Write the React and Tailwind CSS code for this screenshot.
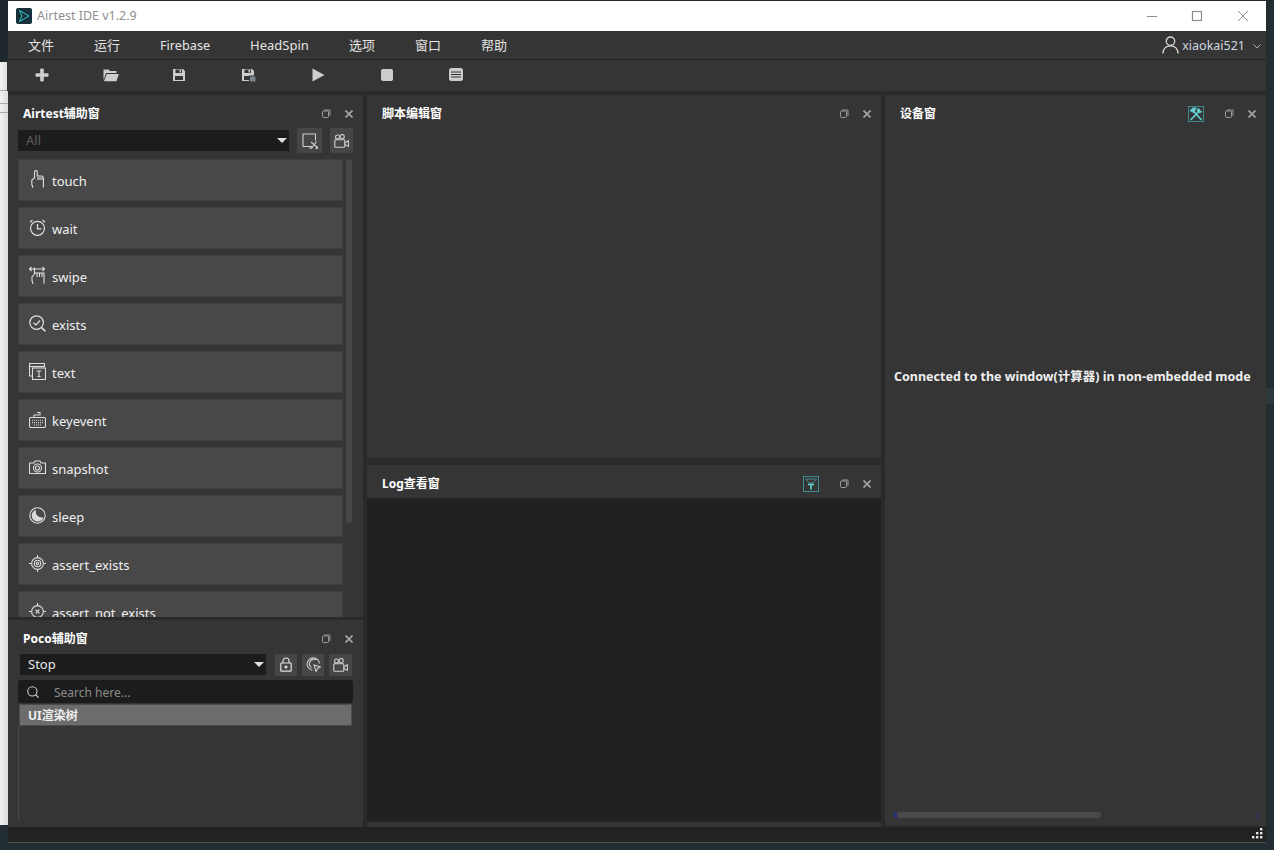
import React from "react";

const font = "font-['Noto_Sans','Noto_Sans_CJK_SC',sans-serif]";

function Logo() {
  return (
    <svg width="16" height="16" viewBox="0 0 16 16">
      <rect width="16" height="16" rx="2" fill="#16313a" />
      <path d="M3.5 2.5 L13 8 L3.5 13.5 L6 8 Z" fill="none" stroke="#35c4c9" strokeWidth="1" />
    </svg>
  );
}

function WindowControls() {
  return (
    <svg width="101" height="12" viewBox="0 0 101 12" fill="none" stroke="#8c8c8c" className="mr-[18px]">
      <path d="M0 6.5 H10" />
      <rect x="45.5" y="1.5" width="9" height="9" strokeWidth="1.2" />
      <path d="M91 1 L101 11 M101 1 L91 11" />
    </svg>
  );
}

function FloatIcon() {
  return (
    <svg width="9" height="9" viewBox="0 0 9 9" fill="none" stroke="#9a9a9a" strokeWidth="1">
      <rect x="0.5" y="2" width="6" height="6.5" rx="1" />
      <path d="M2 1 H8 V7" />
    </svg>
  );
}

function CloseIcon() {
  return (
    <svg width="8" height="8" viewBox="0 0 8 8" fill="none" stroke="#a4a4a4" strokeWidth="1.7">
      <path d="M0.5 0.5 L7.5 7.5 M7.5 0.5 L0.5 7.5" />
    </svg>
  );
}

function DockTitle({ title, extra, className = "" }) {
  return (
    <div className={`flex items-center h-[33px] pt-[4px] shrink-0 pr-[10px] ${className}`}>
      <span className="font-bold text-[12px] text-white">{title}</span>
      <div className="ml-auto flex items-center">
        {extra}
        <div className="flex items-center gap-[14px]">
          <FloatIcon />
          <CloseIcon />
        </div>
      </div>
    </div>
  );
}

function ToolButton({ className = "w-[22px] h-[22px]", children }) {
  return (
    <div className={`${className} bg-[#464646] flex items-center justify-center shrink-0`}>
      {children}
    </div>
  );
}

function TealBox({ children }) {
  return (
    <div className="w-[16px] h-[16px] border border-[#3c8c90] flex items-center justify-center mr-[21px]">
      {children}
    </div>
  );
}

function CropIcon() {
  return (
    <svg width="16" height="16" viewBox="0 0 16 16" fill="none" stroke="#cfcfcf" strokeWidth="1.1">
      <path d="M8 13.5 H1 V1 H13.5 V7.5" />
      <path d="M9 9 L15 14 M14.5 8.5 L10 14.5" />
      <circle cx="9" cy="14.3" r="1.1" />
      <circle cx="15" cy="14.8" r="0.9" />
    </svg>
  );
}

function MovieIcon() {
  return (
    <svg width="15" height="14" viewBox="0 0 15 14" fill="none" stroke="#cfcfcf" strokeWidth="1.1">
      <circle cx="3.5" cy="3" r="2" />
      <circle cx="8.2" cy="2.6" r="2.1" />
      <rect x="0.8" y="5.8" width="10" height="7.4" rx="0.8" />
      <path d="M10.8 9 L14.4 6.8 V12.4 L10.8 10.4" />
    </svg>
  );
}

function LockIcon() {
  return (
    <svg width="12" height="15" viewBox="0 0 12 15" fill="none" stroke="#e0e0e0" strokeWidth="1.2">
      <path d="M3 6 V4 a3 3 0 0 1 6 0 V6" />
      <rect x="0.8" y="6" width="10.4" height="8.2" rx="0.8" />
      <circle cx="6" cy="10" r="1" fill="#e0e0e0" />
    </svg>
  );
}

function ReloadCursorIcon() {
  return (
    <svg width="15" height="15" viewBox="0 0 15 15" fill="none" stroke="#cfcfcf" strokeWidth="1.1">
      <path d="M13.5 6.5 A6.2 6.2 0 1 0 6.5 13.2" />
      <path d="M10.5 3 A4.2 4.2 0 1 0 5.5 10.8" />
      <path d="M8 8 L14.5 10 L11.5 11.5 L10 14.5 Z" />
    </svg>
  );
}

function TouchIcon() {
  return (
    <svg width="13" height="18" viewBox="0 0 13 18" fill="none" stroke="#e0e0e0" strokeWidth="1.1" className="ml-[2px]">
      <path d="M3.5 8 V2 a1.4 1.4 0 0 1 2.8 0 V6 H10 a2.3 2.3 0 0 1 2.4 2.4 V17.5" />
      <path d="M3.5 8 L0.8 10 V14.5 L2 17.8" />
      <path d="M7 7 V10 M9 7 V10 M11 7.5 V10" />
    </svg>
  );
}

function AlarmIcon() {
  return (
    <svg width="17" height="17" viewBox="0 0 17 17" fill="none" stroke="#e0e0e0" strokeWidth="1.2">
      <circle cx="8.5" cy="9.3" r="7" />
      <path d="M8.5 5 V9.8 H12.5" />
      <path d="M1 3.2 L3.5 1 M16 3.2 L13.5 1" />
    </svg>
  );
}

function SwipeIcon() {
  return (
    <svg width="16" height="18" viewBox="0 0 16 18" fill="none" stroke="#e0e0e0" strokeWidth="1.1">
      <path d="M0.5 3 H15.5 M2.5 1 L0.5 3 L2.5 5 M13.5 1 L15.5 3 L13.5 5" />
      <path d="M5.5 8 V1.5 M5.5 8 L3 11 V14.5 L4 17.8" />
      <path d="M5.5 7 H15 V17.8" />
      <path d="M8 7 V11 M10.5 7 V11 M13 7 V11" />
    </svg>
  );
}

function CheckSearchIcon() {
  return (
    <svg width="17" height="17" viewBox="0 0 17 17" fill="none" stroke="#e0e0e0" strokeWidth="1.2">
      <circle cx="7.6" cy="7.6" r="6.8" />
      <path d="M4.5 7.8 L7 10 L11 5.5" />
      <path d="M12.6 12.6 L16.4 16.4" strokeWidth="1.5" />
    </svg>
  );
}

function TextIcon() {
  return (
    <svg width="17" height="17" viewBox="0 0 17 17" fill="none" stroke="#dcdcdc" strokeWidth="1.1">
      <path d="M3 13 H0.5 V0.5 H15.5 V4" />
      <path d="M0.5 3.5 H15.5" />
      <rect x="3.5" y="5" width="13" height="11.5" />
      <path d="M7.5 8 H12.5 M10 8 V13.5 M8.5 13.5 H11.5" />
    </svg>
  );
}

function KeyboardIcon() {
  return (
    <svg width="17" height="17" viewBox="0 0 17 17" fill="none" stroke="#dcdcdc" strokeWidth="1.1">
      <path d="M5 6 V4 H11 V1.5 H8" />
      <rect x="0.5" y="6.5" width="16" height="10" rx="1.5" />
      <path d="M3 9.3 H14 M3 11.6 H14 M5 14 H12" strokeDasharray="1 1" />
    </svg>
  );
}

function SnapshotIcon() {
  return (
    <svg width="17" height="14" viewBox="0 0 17 14" fill="none" stroke="#dcdcdc" strokeWidth="1.1">
      <path d="M0.5 3 H5 L6 1 H11 L12 3 H16.5 V13.5 H0.5 Z" />
      <circle cx="8.5" cy="8" r="4" />
      <circle cx="8.5" cy="8" r="2" />
    </svg>
  );
}

function SleepIcon() {
  return (
    <svg width="17" height="17" viewBox="0 0 17 17" fill="none" stroke="#dcdcdc">
      <circle cx="8.5" cy="8.5" r="7.7" strokeWidth="1.1" />
      <path d="M7 2.8 a6 6 0 1 0 7.5 7.5 a6 6 0 0 1 -7.5 -7.5 Z" fill="#dcdcdc" stroke="none" />
    </svg>
  );
}

function TargetIcon({ cross }) {
  return (
    <svg width="17" height="17" viewBox="0 0 18 18" fill="none" stroke="#dcdcdc" strokeWidth="1.2">
      <circle cx="9" cy="9" r="6.2" />
      <path d="M9 0 V2.5 M9 15.5 V18 M0 9 H2.5 M15.5 9 H18" />
      {cross ? (
        <path d="M7 7 L11 11 M11 7 L7 11" strokeWidth="1.4" />
      ) : (
        <>
          <circle cx="9" cy="9" r="3.4" />
          <circle cx="9" cy="9" r="1.2" />
        </>
      )}
    </svg>
  );
}

const actions = [
  ["touch", <TouchIcon />],
  ["wait", <AlarmIcon />],
  ["swipe", <SwipeIcon />],
  ["exists", <CheckSearchIcon />],
  ["text", <TextIcon />],
  ["keyevent", <KeyboardIcon />],
  ["snapshot", <SnapshotIcon />],
  ["sleep", <SleepIcon />],
  ["assert_exists", <TargetIcon />],
  ["assert_not_exists", <TargetIcon cross />],
];

function ActionRow({ name, icon }) {
  return (
    <div className="h-[42px] shrink-0 bg-[#484848] border border-[#3e3e3e] flex items-center pl-[10px] text-[13px] text-[#f0f0f0]">
      <span className="w-[23px] flex -mt-[2px]">{icon}</span>
      <span className="pt-[4px]">{name}</span>
    </div>
  );
}

function Floppy({ badge }) {
  return (
    <svg width="15" height="14" viewBox="0 0 15 14">
      <path
        fillRule="evenodd"
        fill="#cdcdcd"
        d="M1 1 H11 L13 3 V13 H1 Z M3.5 1.5 V5 H10 V1.5 Z M7.5 2 H9 V4.5 H7.5 Z M3 8 V12 H11 V8 Z"
      />
      {badge && <rect x="8.5" y="8" width="6.5" height="6" fill="#7c878c" stroke="#353535" />}
    </svg>
  );
}

function ToolbarIcon({ children }) {
  return <div className="w-[69px] flex items-center justify-center">{children}</div>;
}

function Caret() {
  return <div className="ml-auto mr-[2px] border-x-[5px] border-x-transparent border-t-[5px] border-t-[#e0e0e0]" />;
}

export default function App() {
  return (
    <div className={`w-[1274px] h-[850px] overflow-hidden flex bg-[#222d31] ${font}`}>
      <div className="w-[8px] shrink-0 flex flex-col">
        <div className="h-[62px] bg-[#1e282c]" />
        <div className="h-[763px] bg-gradient-to-r from-[#f2f2f2] to-[#dcdcdc]">
          <div className="h-[28px]" />
          <div className="h-px bg-[#a8a8a8]" />
          <div className="h-[12px]" />
          <div className="h-px bg-[#a8a8a8]" />
          <div className="h-[8px]" />
          <div className="h-px bg-[#a8a8a8]" />
        </div>
      </div>
      <div className="w-[1258px] h-[842px] shrink-0 flex flex-col bg-[#2a2a2a] mt-[1px] border-b border-[#4a5052]">
        <div className="h-[30px] shrink-0 bg-white flex items-center pl-[8px]">
          <Logo />
          <span className="ml-[5px] text-[12.5px] text-[#8f8f8f]">Airtest IDE v1.2.9</span>
          <div className="ml-auto flex items-center">
            <WindowControls />
          </div>
        </div>
        <div className="h-[29px] pt-[2px] shrink-0 bg-[#353535] border-b border-[#232323] flex items-center pl-[20px] text-[13px] text-[#e4e4e4]">
          <span className="w-[66px]">文件</span>
          <span className="w-[66px]">运行</span>
          <span className="w-[90px] text-[12.7px]">Firebase</span>
          <span className="w-[99px]">HeadSpin</span>
          <span className="w-[66px]">选项</span>
          <span className="w-[66px]">窗口</span>
          <span>帮助</span>
          <div className="ml-auto flex items-center pr-[5px]">
            <svg width="17" height="18" viewBox="0 0 17 18" fill="none" stroke="#d8d8d8" strokeWidth="1.3" className="-mt-[2px]">
              <circle cx="8.5" cy="5.2" r="4.2" />
              <path d="M0.8 17.5 C1.2 12.5 4.5 9.8 8.5 9.8 C12.5 9.8 15.8 12.5 16.2 17.5" />
            </svg>
            <span className="ml-[3px] text-[12.5px] text-[#d0d8e0]">xiaokai521</span>
            <svg width="8" height="5" viewBox="0 0 8 5" fill="none" stroke="#b0b0b0" className="ml-[8px]">
              <path d="M0.5 0.5 L4 4 L7.5 0.5" />
            </svg>
          </div>
        </div>
        <div className="h-[31px] pb-[2px] shrink-0 bg-[#353535] flex items-center -ml-[1px]">
          <ToolbarIcon>
            <svg width="14" height="14" viewBox="0 0 14 14" fill="#cdcdcd">
              <rect x="5.2" y="0.5" width="3.6" height="13" rx="1" />
              <rect x="0.5" y="5.2" width="13" height="3.6" rx="1" />
            </svg>
          </ToolbarIcon>
          <ToolbarIcon>
            <svg width="16" height="14" viewBox="0 0 16 14" fill="#cdcdcd">
              <path d="M0.5 12 V1.5 H5.5 L7 3 H13.5 V5 H3 Z" />
              <path d="M3.7 6 H15.8 L13.5 13.2 H1 Z" />
            </svg>
          </ToolbarIcon>
          <ToolbarIcon><Floppy /></ToolbarIcon>
          <ToolbarIcon><Floppy badge /></ToolbarIcon>
          <ToolbarIcon>
            <svg width="13" height="14" viewBox="0 0 13 14" fill="#cdcdcd" className="ml-[1px]">
              <path d="M0.5 0.5 L12.5 7 L0.5 13.5 Z" />
            </svg>
          </ToolbarIcon>
          <ToolbarIcon>
            <svg width="12" height="12" viewBox="0 0 12 12" fill="#cdcdcd">
              <rect width="12" height="12" rx="2" />
            </svg>
          </ToolbarIcon>
          <ToolbarIcon>
            <svg width="14" height="13" viewBox="0 0 14 13">
              <rect width="14" height="13" rx="2.5" fill="#cdcdcd" />
              <path d="M2 4 H12 M2 6.5 H12 M2 9 H12" stroke="#353535" strokeWidth="1" />
            </svg>
          </ToolbarIcon>
        </div>
        <div className="flex-1 min-h-0 flex pt-[4px] gap-[4px]">
          <div className="w-[355px] shrink-0 flex flex-col">
            <div className="h-[522px] shrink-0 bg-[#353535] pl-[10px] flex flex-col overflow-hidden">
              <DockTitle title={<span className="pl-[5px]">Airtest辅助窗</span>} />
              <div className="flex items-center h-[25px] shrink-0">
                <div className="w-[271px] h-[21px] bg-[#1c1c1c] flex items-center pl-[8px] text-[13px] text-[#5c5c5c]">
                  <span className="pt-[1px]">All</span>
                  <Caret />
                </div>
                <div className="ml-[8px]">
                  <ToolButton className="w-[25px] h-[25px]"><CropIcon /></ToolButton>
                </div>
                <div className="ml-[8px]">
                  <ToolButton className="w-[23px] h-[25px]"><MovieIcon /></ToolButton>
                </div>
              </div>
              <div className="flex mt-[6px] min-h-0">
                <div className="w-[325px] flex flex-col gap-[6px]">
                  {actions.map(([name, icon]) => (
                    <ActionRow key={name} name={name} icon={icon} />
                  ))}
                </div>
                <div className="ml-[3px] w-[6px] h-[364px] rounded-[3px] bg-[#484848]" />
              </div>
            </div>
            <div className="flex-1 mt-[3px] bg-[#353535] pl-[10px] flex flex-col">
              <DockTitle title={<span className="pl-[5px] pt-[1px] inline-block">Poco辅助窗</span>} />
              <div className="flex items-center h-[23px] shrink-0 pl-[2px]">
                <div className="w-[246px] h-[21px] bg-[#1c1c1c] flex items-center pl-[8px] text-[13px] text-[#e8e8e8]">
                  Stop
                  <Caret />
                </div>
                <div className="ml-[9px] flex gap-[5px]">
                  <ToolButton><LockIcon /></ToolButton>
                  <ToolButton><ReloadCursorIcon /></ToolButton>
                  <ToolButton className="w-[23px] h-[22px]"><MovieIcon /></ToolButton>
                </div>
              </div>
              <div className="mt-[4px] w-[335px] h-[23px] rounded-[3px] bg-[#1c1c1c] flex items-center pl-[9px] text-[12px] text-[#8c8c8c] shrink-0">
                <svg width="12" height="12" viewBox="0 0 12 12" fill="none" stroke="#d0d0d0" strokeWidth="1.1">
                  <circle cx="5.4" cy="5.4" r="4.6" />
                  <path d="M8.6 8.6 L11.5 11.5" />
                </svg>
                <span className="ml-[15px] pt-[2px]">Search here...</span>
              </div>
              <div className="w-[333px] h-[22px] shrink-0 mt-[1px] ml-[1px] pt-[2px] bg-[#6c6c6c] border border-[#4c4c4c] flex items-center pl-[8px] text-[12px] font-bold text-[#f0f0f0]">
                UI渲染树
              </div>
              <div className="w-px h-[95px] bg-[#484848]" />
            </div>
          </div>
          <div className="w-[514px] shrink-0 flex flex-col">
            <div className="h-[363px] shrink-0 bg-[#353535] pl-[15px]">
              <DockTitle title="脚本编辑窗" />
            </div>
            <div className="mt-[7px] bg-[#353535] flex-1 min-h-0 flex flex-col pb-[5px]">
              <DockTitle
                title="Log查看窗"
                className="pl-[15px]"
                extra={
                  <TealBox>
                    <svg width="12" height="12" viewBox="0 0 12 12" fill="none">
                      <path d="M0.5 1 H11.5 L8 5 H4 Z" stroke="#4e8a8e" strokeWidth="1" />
                      <path d="M3 6.5 H9 M6 6.5 V11.5" stroke="#5fd6d6" strokeWidth="1.6" />
                    </svg>
                  </TealBox>
                }
              />
              <div className="flex-1 bg-[#212121]" />
            </div>
          </div>
          <div className="flex-1 bg-[#353535] flex flex-col mb-[1px]">
            <DockTitle
              title="设备窗"
              className="pl-[15px]"
              extra={
                <TealBox>
                  <svg width="14" height="14" viewBox="0 0 14 14" fill="none" stroke="#62cfcf">
                    <path d="M4 3.5 L12.5 13" strokeWidth="1.7" />
                    <path d="M0.8 3.8 L3.5 0.8 H7.5 L5 5.8 L3.4 5.2 Z" fill="#62cfcf" strokeWidth="0.4" />
                    <path d="M9.2 5.2 L1.6 13" strokeWidth="1.7" />
                    <path d="M9 1.2 A3 3 0 0 0 9.4 5.6 A3 3 0 0 0 13.2 4.6 L11.3 4 L10.8 2.2 Z" fill="#62cfcf" strokeWidth="0.4" />
                  </svg>
                </TealBox>
              }
            />
            <div className="flex-1 min-h-0 relative flex items-center pb-[200px]">
              <span className="pl-[9px] font-bold text-[12.5px] text-[#f0f0f0] whitespace-nowrap">
                Connected to the window(计算器) in non-embedded mode
              </span>
              <div className="absolute left-[9px] bottom-[8px] w-[3px] h-[6px] bg-[#262f7a]" />
              <div className="absolute left-[12px] bottom-[8px] w-[204px] h-[6px] rounded-[3px] bg-[#4a4a4a]" />
              <div className="absolute left-[372px] bottom-[8px] w-px h-[6px] bg-[#262f7a]" />
            </div>
          </div>
        </div>
        <div className="h-[15px] shrink-0 bg-[#222222] flex items-end justify-end pr-[3px] pb-[2px]">
          <svg width="12" height="12" viewBox="0 0 12 12" fill="#e8e8e8">
            <rect x="9" y="0" width="2.4" height="2.4" />
            <rect x="5" y="4" width="2.4" height="2.4" />
            <rect x="9" y="4" width="2.4" height="2.4" />
            <rect x="1" y="8" width="2.4" height="2.4" />
            <rect x="5" y="8" width="2.4" height="2.4" />
            <rect x="9" y="8" width="2.4" height="2.4" />
          </svg>
        </div>
      </div>
      <div className="w-[8px] shrink-0 flex flex-col">
        <div className="h-[388px]" />
        <div className="h-[16px] bg-[#2b383c]" />
      </div>
    </div>
  );
}
